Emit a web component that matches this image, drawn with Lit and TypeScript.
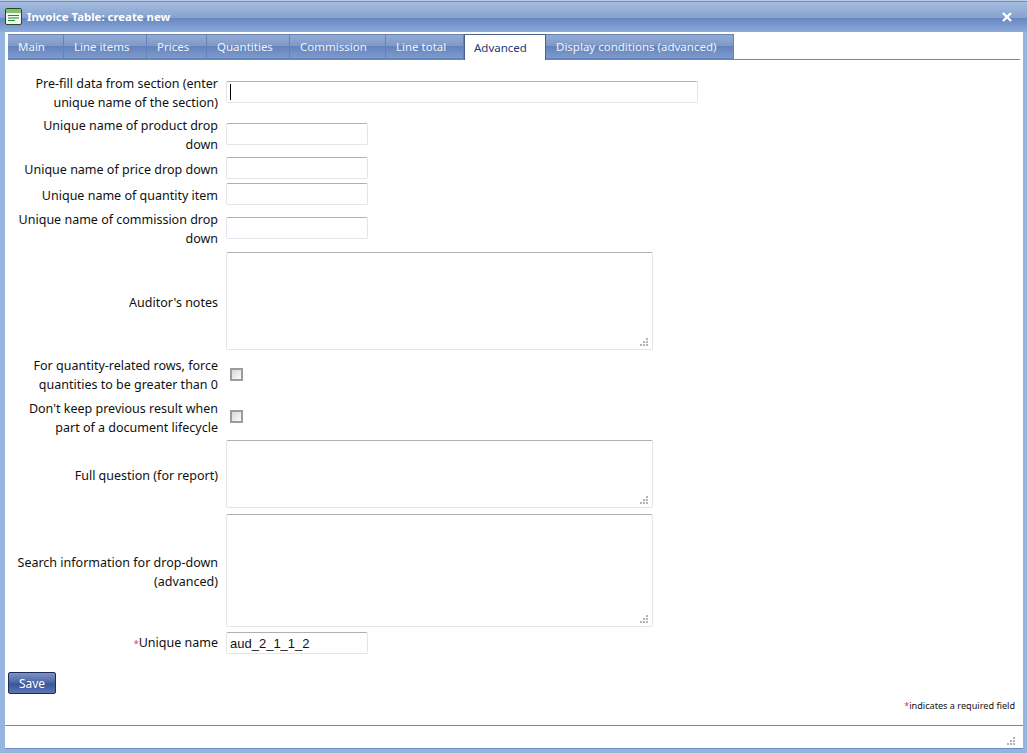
import { LitElement, html, css } from "lit";
import { customElement } from "lit/decorators.js";

const TABS = ["Main", "Line items", "Prices", "Quantities", "Commission", "Line total", "Advanced", "Display conditions (advanced)"];

const grip = html`<svg class="grip" width="9" height="9" viewBox="0 0 9 9"><path fill="#b4b4b4" d="M7 1h2v2H7zM4 4h2v2H4zM7 4h2v2H7zM1 7h2v2H1zM4 7h2v2H4zM7 7h2v2H7z"/></svg>`;

@customElement("app-root")
export class AppRoot extends LitElement {
  static styles = css`
    :host { display: block; width: 1027px; height: 753px; overflow: hidden; font-family: "Noto Sans", sans-serif; font-size: 12.5px; color: #111; }
    * { box-sizing: border-box; }
    .window { height: 753px; display: flex; flex-direction: column; background: #95b5e0; padding: 0 4px 4px 5px; }
    .titlebar { margin: 0 -4px 0 -5px; height: 32px; flex: none; display: flex; align-items: center; padding: 0 15px 0 5px; gap: 5px; color: #fff; font-weight: 700; border-top: 1px solid #b9cbe6; box-shadow: inset 0 1px 0 #6d8dc0;
      background: linear-gradient(#a5bbde 2px, #86a1ce 17px, #6586bf 17px, #8dabdb 31px); }
    .title { flex: 1; font-size: 11.4px; }
    .close { width: 10px; height: 10px; display: block; }
    .content { flex: 1; min-height: 0; background: #fff; display: flex; flex-direction: column; border-bottom: 1px solid #6d8bc0; }
    .main { flex: 1; padding: 2px 3px 0 3px; display: flex; flex-direction: column; }
    .tabs { display: flex; height: 26px; border-bottom: 1px solid #6d87b8; flex: none; font-size: 11.5px; }
    .tab { height: 25px; display: flex; align-items: center; padding: 0 0 1px 10px; color: #eef3fb; border: 1px solid #6484b8; border-left: 0; background: linear-gradient(#94abd3, #7d98c7 50%, #6483bb 50%, #7e9bcf); }
    .tab.active { background: #fff; color: #1f3a7a; height: 26px; padding-left: 9px; border-bottom: 0; border-top: 1px solid #47638f; border-left: 1px solid #47638f; border-right: 1px solid #47638f; }
    .form { margin-top: 14px; display: flex; flex-direction: column; }
    .row { display: grid; grid-template-columns: 210px 1fr; column-gap: 8px; align-items: center; line-height: 19px; }
    .label { text-align: right; }
    .g3 { margin-top: 3px; } .g4 { margin-top: 4px; } .g5 { margin-top: 5px; } .g6 { margin-top: 6px; }
    .nudge { padding-top: 2px; }
    .raise { padding-bottom: 1px; }
    input[type="text"], textarea { display: block; border: 1px solid #e1e5ec; border-top-color: #b0b0b0; border-radius: 2px; outline: none; padding: 1px 3px; background: #fff; font-family: "Liberation Sans", sans-serif; font-size: 13px; color: #111; resize: none; }
    .wide { width: 472px; height: 22px; }
    .short { width: 142px; height: 22px; }
    .lift { margin-bottom: 2px; }
    .area { width: 427px; position: relative; }
    .area textarea { width: 100%; height: 100%; }
    .h98 { height: 98px; } .h68 { height: 68px; } .h113 { height: 113px; }
    .grip { position: absolute; right: 5px; bottom: 4px; }
    .field { position: relative; width: max-content; }
    .caret { position: absolute; left: 4px; top: 3px; width: 1px; height: 16px; background: #000; }
    .check { appearance: none; display: block; margin: -3px 0 0 4px; width: 13px; height: 13px; border: 2px solid #9c9c9c; background: linear-gradient(135deg, #d8d8d8, #fbfbfb); }
    .check.low { margin-top: -1px; }
    .star { color: #e8343c; font-size: 9px; }
    .save { margin-top: 18px; width: 48px; height: 22px; align-self: flex-start; border: 1px solid #1d2c56; border-radius: 2px; color: #fff; font-family: inherit; font-size: 12px; padding: 0; background: linear-gradient(#7c91c6, #4e68a8 45%, #3a5598 55%, #5a75b6); }
    .note { margin: 5px 5px 0 0; text-align: right; font-size: 9.15px; line-height: 13px; color: #111; }
    .status { flex: none; height: 23px; border-top: 1px solid #6d87b8; position: relative; margin-top: 13px; }
    .status .grip { right: 8px; bottom: 3px; }
  `;

  private tabWidths = [56, 83, 60, 83, 96, 78, 82, 188];

  render() {
    return html`
      <div class="window">
        <div class="titlebar">
          <svg width="17" height="17" viewBox="0 0 17 17">
            <rect x=".5" y=".5" width="16" height="16" rx="1.5" fill="#f4f8ee" stroke="#27462c"/>
            <rect x="1" y="1" width="15" height="4" fill="#7fc26a"/>
            <path d="M3 7.5h11M3 10h11M3 12.5h7" stroke="#1f8a3a" stroke-width="1.2"/>
          </svg>
          <span class="title">Invoice Table: create new</span>
          <svg class="close" viewBox="0 0 10 10"><path d="M1 1l8 8M9 1l-8 8" stroke="#fff" stroke-width="2.4"/></svg>
        </div>
        <div class="content">
          <div class="main">
            <div class="tabs">
              ${TABS.map((t, i) => html`<div class="tab ${t === "Advanced" ? "active" : ""}" style="width:${this.tabWidths[i]}px">${t}</div>`)}
            </div>
            <div class="form">
              <div class="row">
                <div class="label">Pre-fill data from section (enter<br>unique name of the section)</div>
                <div class="field lift"><input type="text" class="wide"><span class="caret"></span></div>
              </div>
              <div class="row g4">
                <div class="label">Unique name of product drop<br>down</div>
                <input type="text" class="short lift">
              </div>
              <div class="row g3">
                <div class="label nudge">Unique name of price drop down</div>
                <input type="text" class="short">
              </div>
              <div class="row g4">
                <div class="label nudge">Unique name of quantity item</div>
                <input type="text" class="short">
              </div>
              <div class="row g5">
                <div class="label">Unique name of commission drop<br>down</div>
                <input type="text" class="short lift">
              </div>
              <div class="row g4">
                <div class="label nudge">Auditor's notes</div>
                <div class="area h98"><textarea></textarea>${grip}</div>
              </div>
              <div class="row g6">
                <div class="label">For quantity-related rows, force<br>quantities to be greater than 0</div>
                <input type="checkbox" class="check low">
              </div>
              <div class="row g5">
                <div class="label">Don't keep previous result when<br>part of a document lifecycle</div>
                <input type="checkbox" class="check">
              </div>
              <div class="row g3">
                <div class="label nudge">Full question (for report)</div>
                <div class="area h68"><textarea></textarea>${grip}</div>
              </div>
              <div class="row g6">
                <div class="label nudge">Search information for drop-down<br>(advanced)</div>
                <div class="area h113"><textarea></textarea>${grip}</div>
              </div>
              <div class="row g5">
                <div class="label raise"><span class="star">*</span>Unique name</div>
                <input type="text" class="short" value="aud_2_1_1_2">
              </div>
            </div>
            <button class="save">Save</button>
            <div class="note"><span class="star">*</span>indicates a required field</div>
          </div>
          <div class="status">${grip}</div>
        </div>
      </div>
    `;
  }
}
